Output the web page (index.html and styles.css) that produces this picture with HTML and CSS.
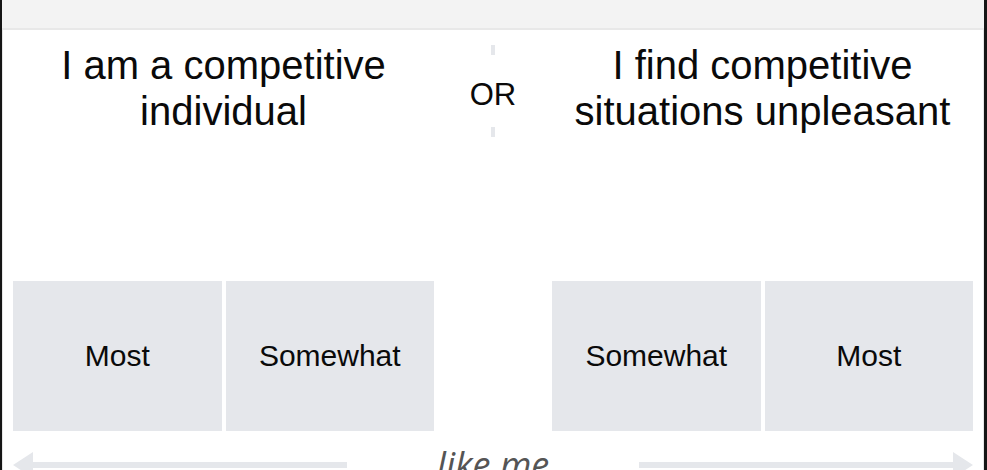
FILE: index.html
```html
<!DOCTYPE html>
<html lang="en">
<head>
<meta charset="utf-8">
<title>Competitive</title>
<link rel="stylesheet" href="styles.css">
</head>
<body>
<div class="frame">
  <div class="topbar"></div>
  <div class="card">
    <div class="statements">
      <div class="statement">I am a competitive individual</div>
      <div class="or-col">
        <span class="seg"></span>
        <span class="or">OR</span>
        <span class="seg"></span>
      </div>
      <div class="statement">I find competitive situations unpleasant</div>
    </div>
    <div class="choices">
      <div class="group">
        <button class="choice">Most</button>
        <button class="choice">Somewhat</button>
      </div>
      <div class="spacer"></div>
      <div class="group">
        <button class="choice">Somewhat</button>
        <button class="choice">Most</button>
      </div>
    </div>
    <div class="scale">
      <div class="arrow">
        <span class="head head-left"></span>
        <span class="shaft"></span>
      </div>
      <span class="like">like me</span>
      <div class="arrow">
        <span class="shaft"></span>
        <span class="head head-right"></span>
      </div>
    </div>
  </div>
</div>
</body>
</html>
```
FILE: styles.css
```css
html, body {
  margin: 0;
  padding: 0;
  height: 470px;
  overflow: hidden;
  background: #ffffff;
}

.frame {
  width: 982px;
  height: 470px;
  border-left: 2px solid #151515;
  border-right: 3px solid #151515;
  display: flex;
  flex-direction: column;
  font-family: "Liberation Sans", Arial, sans-serif;
  color: #0a0a0a;
}

.topbar {
  height: 28px;
  background: #f3f3f3;
  flex: none;
}

.card {
  flex: 1;
  border-top: 2px solid #e8e8e8;
  border-left: 1px solid #e6e6e6;
  border-right: 1px solid #e6e6e6;
  padding: 12px 10px 0;
}

.statements {
  display: grid;
  grid-template-columns: 421px 118px 421px;
  height: 239px;
}

.statement {
  font-size: 40px;
  text-align: center;
  line-height: 46px;
}

.or-col {
  display: flex;
  flex-direction: column;
  align-items: center;
  padding-top: 3px;
}

.seg {
  display: block;
  width: 4px;
  height: 10px;
  background: #e5e7eb;
}

.or {
  font-size: 31px;
  line-height: 36px;
  margin: 22px 0 14px;
}

.choices {
  display: flex;
  height: 150px;
}

.group {
  display: flex;
  gap: 4px;
  width: 421px;
}

.spacer {
  width: 118px;
}

.choice {
  flex: 1;
  border: none;
  margin: 0;
  padding: 0;
  background: #e5e7eb;
  font-family: "Liberation Sans", Arial, sans-serif;
  font-size: 30px;
  color: #0a0a0a;
}

.scale {
  display: flex;
  align-items: center;
  margin-top: 12px;
  height: 44px;
}

.arrow {
  flex: 1;
  display: flex;
  align-items: center;
  height: 26px;
}

.shaft {
  flex: 1;
  height: 6px;
  background: #e5e7eb;
}

.head {
  width: 0;
  height: 0;
  border-top: 13px solid transparent;
  border-bottom: 13px solid transparent;
}

.head-left {
  border-right: 20px solid #e5e7eb;
}

.head-right {
  border-left: 20px solid #e5e7eb;
}

.like {
  margin: 0 90px;
  font-family: "Open Sans", sans-serif;
  font-style: italic;
  font-size: 36px;
  line-height: 44px;
  color: #555555;
  white-space: nowrap;
}
```
